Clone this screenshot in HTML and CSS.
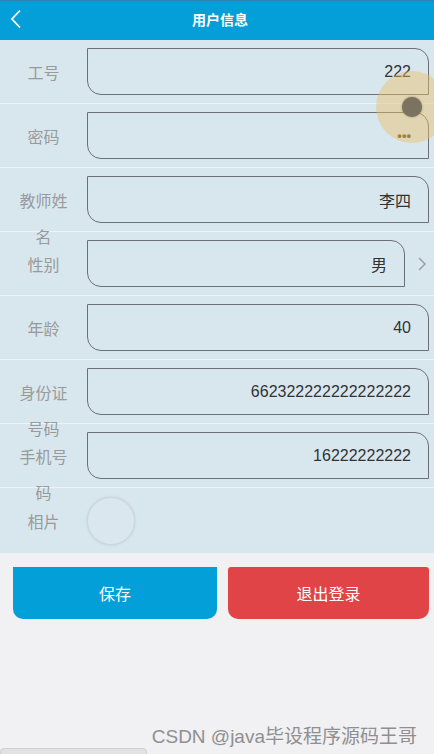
FILE: index.html
```html
<!DOCTYPE html>
<html lang="zh">
<head>
<meta charset="utf-8">
<title>用户信息</title>
<link rel="stylesheet" href="styles.css">
</head>
<body>
<div class="app">
  <header class="topbar">
    <span class="back"><svg width="14" height="20" viewBox="0 0 14 20"><path d="M11 1.5 L3 10 L11 18.5" fill="none" stroke="#fff" stroke-width="1.8"/></svg></span>
    <h1 class="title">用户信息</h1>
  </header>
  <section class="form">
    <div class="row"><div class="label">工号</div><div class="field">222</div></div>
    <div class="row"><div class="label">密码</div><div class="field dots">•••</div></div>
    <div class="row"><div class="label">教师姓名</div><div class="field">李四</div></div>
    <div class="row"><div class="label">性别</div><div class="field short">男</div><span class="chev"><svg width="10" height="16" viewBox="0 0 10 16"><path d="M2 2 L8 8 L2 14" fill="none" stroke="#9aa0a6" stroke-width="1.5"/></svg></span></div>
    <div class="row"><div class="label">年龄</div><div class="field">40</div></div>
    <div class="row"><div class="label">身份证号码</div><div class="field">662322222222222222</div></div>
    <div class="row"><div class="label">手机号码</div><div class="field">16222222222</div></div>
    <div class="row"><div class="label">相片</div><div class="avatar"></div></div>
  </section>
  <div class="actions">
    <button class="btn save">保存</button>
    <button class="btn logout">退出登录</button>
  </div>
  <div class="spacer"></div>
  <div class="watermark">CSDN @java毕设程序源码王哥</div>
  <div class="statusbar"></div>
  <div class="touch"><div class="touch-dot"></div></div>
</div>
</body>
</html>
```
FILE: styles.css
```css
* { box-sizing: border-box; margin: 0; padding: 0; }
html, body { width: 434px; height: 754px; overflow: hidden; }
body {
  background: #f1f0f3;
  font-family: "Noto Sans CJK SC", "Liberation Sans", Arial, sans-serif;
}
.app { position: relative; width: 434px; height: 754px; display: flex; flex-direction: column; }
.topbar {
  height: 40px;
  background: #049fd8;
  border-top: 1px solid #2a85b0;
  display: flex;
  align-items: center;
  justify-content: center;
  padding: 0 0 4px 6px;
  position: relative;
}
.back { position: absolute; left: 9px; top: 8px; display: flex; }
.title { color: #fff; font-size: 14px; font-weight: bold; letter-spacing: 0; }
.form { background: #d8e7ee; }
.row {
  height: 64px;
  display: flex;
  align-items: center;
  border-bottom: 1px solid #edf3f6;
  position: relative;
}
.row:last-child { border-bottom: none; height: 65px; }
.label {
  width: 87px;
  padding: 0 17px;
  height: 36px;
  line-height: 36px;
  text-align: center;
  font-size: 16px;
  color: #9a9a9a;
  overflow: visible;
  position: relative;
  z-index: 1;
}
.field {
  width: 342px;
  height: 47px;
  border: 1px solid #6b7075;
  border-radius: 0 14px 0 14px;
  display: flex;
  align-items: center;
  justify-content: flex-end;
  padding-right: 17px;
  font-family: "Liberation Sans", "Noto Sans CJK SC", Arial, sans-serif;
  font-size: 16px;
  color: #333;
}
.field.short { width: 318px; padding-right: 17px; }
.field.dots { font-size: 13px; font-weight: bold; color: #5e4c30; letter-spacing: 0; }
.chev { margin-left: 12px; display: flex; }
.avatar {
  width: 48px;
  height: 48px;
  border-radius: 50%;
  border: 1px solid #d0d6da;
  box-shadow: 0 0 3px rgba(0,0,0,0.12);
  background: #dae7ee;
}
.actions {
  display: flex;
  gap: 11px;
  padding: 14px 5px 0 13px;
}
.btn {
  height: 52px;
  border: none;
  color: #fff;
  font-size: 16px;
  font-family: "Noto Sans CJK SC", sans-serif;
  border-radius: 0 0 10px 10px;
}
.save { background: #039fd8; width: 204px; flex: none; }
.logout { background: #e04446; width: 201px; flex: none; border-radius: 3px 3px 10px 10px; }
.spacer { flex: 1; }
.watermark {
  text-align: right;
  padding-right: 17px;
  font-size: 19px;
  color: #8f8f8f;
  font-family: "Liberation Sans", "Noto Sans CJK SC", sans-serif;
  line-height: 22px;
  margin-bottom: 6px;
}
.statusbar {
  position: absolute;
  left: 0;
  bottom: -6px;
  width: 147px;
  height: 12px;
  background: #e2e2e6;
  border: 1px solid #cfcfd3;
  border-radius: 4px;
}
.touch {
  position: absolute;
  left: 376px;
  top: 71px;
  width: 72px;
  height: 72px;
  border-radius: 50%;
  background: rgba(236, 190, 100, 0.45);
  display: flex;
  align-items: center;
  justify-content: center;
  z-index: 5;
}
.touch-dot {
  width: 20px;
  height: 20px;
  border-radius: 50%;
  background: #7b735f;
  box-shadow: 0 0 2px #7b735f;
}
```
